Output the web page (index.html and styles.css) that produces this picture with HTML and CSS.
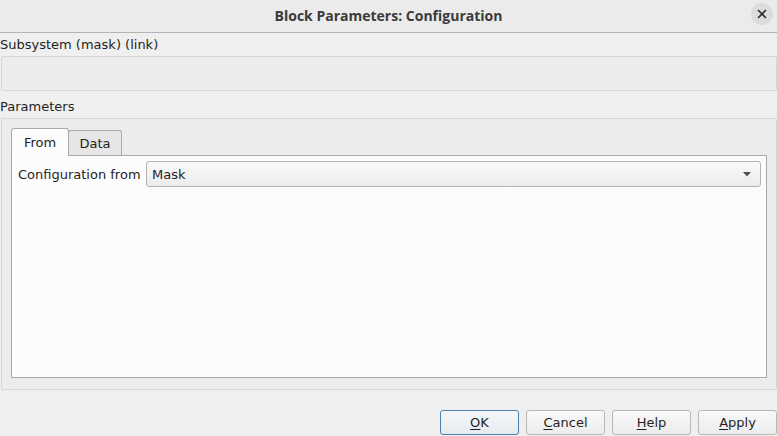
FILE: index.html
```html
<!DOCTYPE html>
<html>
<head>
<meta charset="utf-8">
<link rel="stylesheet" href="styles.css">
</head>
<body>
<div class="dialog">
  <div class="titlebar">
    <div class="title">Block Parameters: Configuration</div>
    <button class="close" aria-label="Close">
      <svg width="10" height="10" viewBox="0 0 10 10"><path d="M1 1L9 9M9 1L1 9" stroke="#2e2e2e" stroke-width="1.6" fill="none"/></svg>
    </button>
  </div>
  <div class="content">
    <div class="label">Subsystem (mask) (link)</div>
    <div class="descbox"></div>
    <div class="label params">Parameters</div>
    <div class="group">
      <div class="tabs">
        <div class="tab active">From</div>
        <div class="tab">Data</div>
      </div>
      <div class="pane">
        <div class="row">
          <span class="rowlabel">Configuration from</span>
          <div class="combo">
            <span>Mask</span>
            <svg class="arrow" width="8" height="5" viewBox="0 0 8 5"><path d="M0 0H8L4 4.5Z" fill="#505050"/></svg>
          </div>
        </div>
      </div>
    </div>
    <div class="buttons">
      <button class="btn default"><u>O</u>K</button>
      <button class="btn"><u>C</u>ancel</button>
      <button class="btn"><u>H</u>elp</button>
      <button class="btn"><u>A</u>pply</button>
    </div>
  </div>
</div>
</body>
</html>
```
FILE: styles.css
```css
* { box-sizing: border-box; }
html, body { margin: 0; padding: 0; }
body {
  width: 777px;
  height: 436px;
  overflow: hidden;
  background: #efefef;
  font-family: "DejaVu Sans", sans-serif;
  font-size: 13px;
  color: #2b2b2b;
}
.dialog { width: 777px; height: 436px; display: flex; flex-direction: column; }
.titlebar {
  height: 33px;
  background: #ebebeb;
  border-bottom: 1px solid #b4b4b4;
  display: flex;
  align-items: center;
  justify-content: center;
  position: relative;
}
.title {
  font-family: "Open Sans", "DejaVu Sans", sans-serif;
  font-weight: 700;
  font-size: 14px;
  color: #3a3a3a;
  margin-top: -2px;
}
.close {
  position: absolute;
  right: 4px;
  top: 3px;
  width: 22px;
  height: 22px;
  border-radius: 50%;
  border: none;
  background: #dcdcdc;
  display: flex;
  align-items: center;
  justify-content: center;
  padding: 0;
}
.content { flex: 1; display: flex; flex-direction: column; padding: 0 0 0 1px; }
.label { height: 23px; line-height: 23px; color: #1f1f1f; margin-left: -1px; }
.descbox {
  height: 35px;
  border: 1px solid #d6d6d6;
  border-radius: 2px;
  background: #ececec;
}
.params { margin-top: 4px; }
.group {
  height: 272px;
  border: 1px solid #d6d6d6;
  border-radius: 2px;
  background: #ececec;
  padding: 9px 9px 11px 9px;
  display: flex;
  flex-direction: column;
}
.tabs { display: flex; height: 27px; align-items: flex-end; position: relative; z-index: 1; }
.tab {
  height: 25px;
  border: 1px solid #ababab;
  border-bottom: none;
  border-radius: 3px 3px 0 0;
  background: #e6e6e6;
  line-height: 25px;
  color: #1f1f1f;
}
.tab.active {
  height: 28px;
  width: 58px;
  padding: 0;
  text-align: center;
  background: #fcfcfc;
  margin-bottom: -1px;
  line-height: 27px;
}
.tab:not(.active) { width: 54px; text-align: center; padding: 0; margin-left: -1px; }
.pane {
  flex: 1;
  border: 1px solid #a9a9a9;
  background: #fcfcfc;
  padding: 5px 5px 0 6px;
}
.row { display: flex; align-items: center; height: 26px; }
.rowlabel { width: 128px; color: #1f1f1f; }
.combo {
  flex: 1;
  height: 26px;
  border: 1px solid #b3b3b3;
  border-radius: 3px;
  background: linear-gradient(#f9f9f9, #ececec);
  display: flex;
  align-items: center;
  justify-content: space-between;
  padding: 0 9px 0 5px;
  color: #1f1f1f;
}
.arrow { display: block; }
.buttons {
  margin-top: auto;
  display: flex;
  justify-content: flex-end;
  gap: 7px;
  padding-bottom: 1px;
}
.btn {
  width: 79px;
  height: 25px;
  border: 1px solid #b9b9b9;
  border-radius: 3px;
  background: linear-gradient(#f8f8f8, #ececec);
  font-family: "DejaVu Sans", sans-serif;
  font-size: 13px;
  color: #1f1f1f;
  padding: 0;
}
.btn.default { border-color: #4a7fb0; background: linear-gradient(#f4f7fa, #e6ebf0); }
.btn u { text-decoration-thickness: 1px; text-underline-offset: 2px; }
```
